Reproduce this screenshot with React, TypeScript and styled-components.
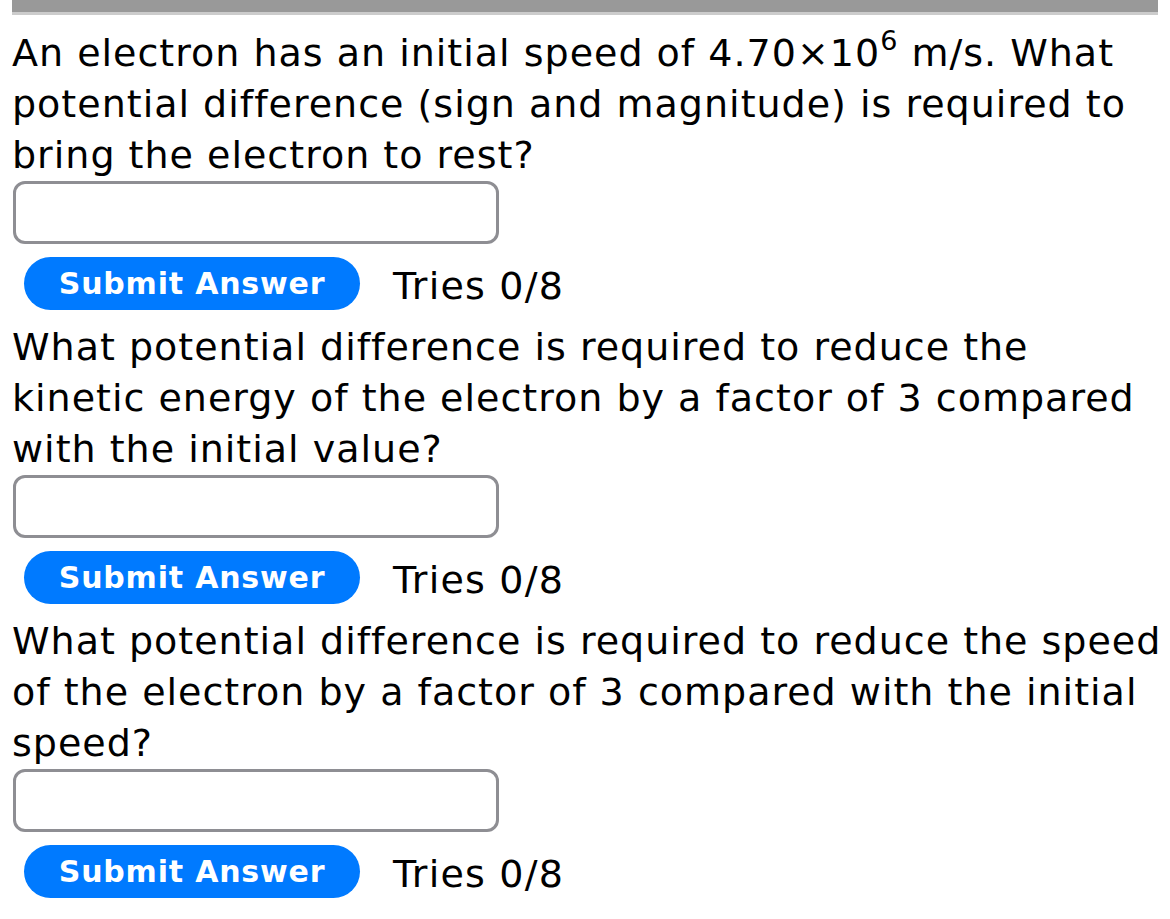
import { FC } from 'react';
import styled, { createGlobalStyle } from 'styled-components';

const GlobalStyle = createGlobalStyle`
  body {
    margin: 0;
    background: #ffffff;
    font-family: 'DejaVu Sans', Verdana, sans-serif;
    font-variant-ligatures: none;
    color: #000000;
  }
`;

const StyledPage = styled.div`
  width: 1170px;
`;

const StyledTopBar = styled.div`
  margin: 0 12px;
  height: 12px;
  background: #999999;
  border-bottom: 3px solid #cccccc;
`;

const StyledContent = styled.div`
  padding: 10px 0 0 12px;
`;

const StyledQuestion = styled.section`
  display: flex;
  flex-direction: column;
  align-items: flex-start;
`;

const StyledPrompt = styled.p`
  margin: 0;
  padding-top: 3px;
  font-size: 38px;
  line-height: 51px;
  letter-spacing: 1px;
  width: 1158px;
`;

const StyledSup = styled.sup`
  font-size: 27px;
  line-height: 0;
  vertical-align: 16px;
`;

const StyledInput = styled.input`
  box-sizing: border-box;
  width: 486px;
  height: 63px;
  margin: 0 0 13px 1px;
  border: 3px solid #8e8e93;
  border-radius: 12px;
  background: #ffffff;
  outline: none;
`;

const StyledActions = styled.div`
  display: flex;
  align-items: center;
  gap: 33px;
  margin: 0 0 9px 12px;
`;

const StyledButton = styled.button`
  width: 336px;
  height: 53px;
  border: none;
  border-radius: 27px;
  background: #007aff;
  color: #ffffff;
  font-family: 'DejaVu Sans', Verdana, sans-serif;
  font-weight: 700;
  font-size: 30px;
  letter-spacing: 0.8px;
  cursor: pointer;
`;

const StyledTries = styled.span`
  font-size: 38px;
  letter-spacing: 1.2px;
  padding-top: 4px;
`;

interface QuestionProps {
  children: React.ReactNode;
}

const Question: FC<QuestionProps> = ({ children }) => (
  <StyledQuestion>
    <StyledPrompt>{children}</StyledPrompt>
    <StyledInput type="text" />
    <StyledActions>
      <StyledButton>Submit Answer</StyledButton>
      <StyledTries>Tries 0/8</StyledTries>
    </StyledActions>
  </StyledQuestion>
);

export default function App() {
  return (
    <StyledPage>
      <GlobalStyle />
      <StyledTopBar />
      <StyledContent>
        <Question>
          An electron has an initial speed of 4.70×10<StyledSup>6</StyledSup> m/s. What
          potential difference (sign and magnitude) is required to bring the electron to
          rest?
        </Question>
        <Question>
          What potential difference is required to reduce the kinetic energy of the
          electron by a factor of 3 compared with the initial value?
        </Question>
        <Question>
          What potential difference is required to reduce the speed of the electron by a
          factor of 3 compared with the initial speed?
        </Question>
      </StyledContent>
    </StyledPage>
  );
}
